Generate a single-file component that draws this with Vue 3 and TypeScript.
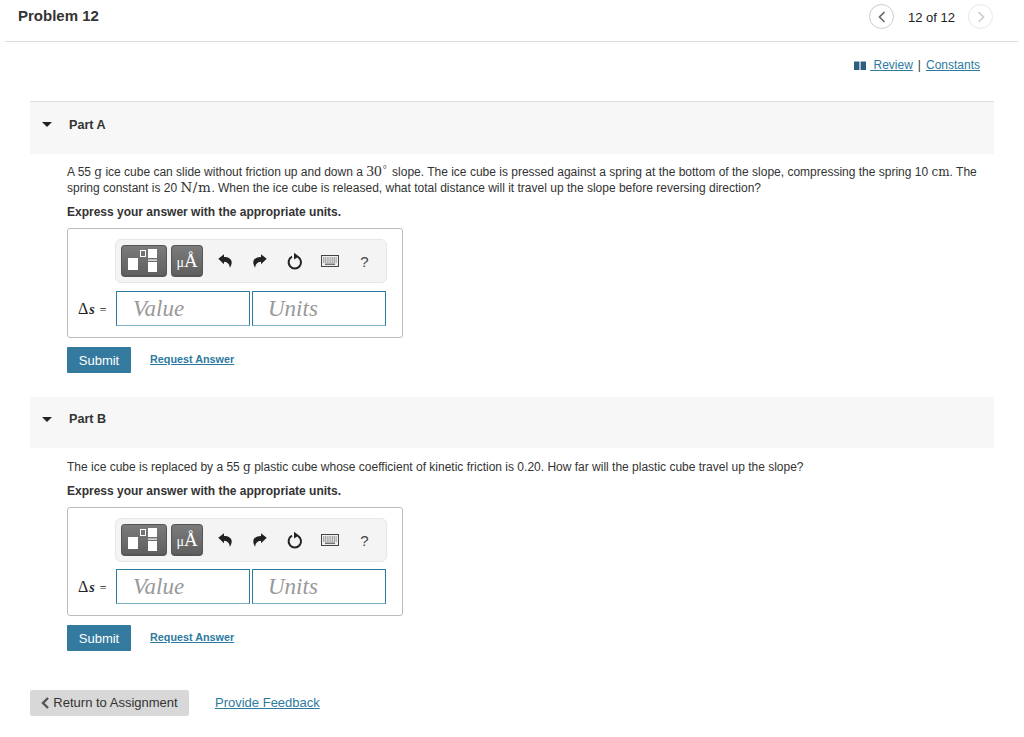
<script setup lang="ts">
interface Part { name: string; id: string }
const parts: Part[] = [
  { name: 'Part A', id: 'a' },
  { name: 'Part B', id: 'b' },
]
</script>

<template>
  <div class="page">
    <header class="top">
      <h1 class="title">Problem 12</h1>
      <nav class="pager">
        <span class="circle">
          <svg width="8" height="12" viewBox="0 0 8 12"><path d="M6.5 1 L1.5 6 L6.5 11" fill="none" stroke="#666" stroke-width="1.6"/></svg>
        </span>
        <span class="count">12 of 12</span>
        <span class="circle faint">
          <svg width="8" height="12" viewBox="0 0 8 12"><path d="M1.5 1 L6.5 6 L1.5 11" fill="none" stroke="#ccc" stroke-width="1.6"/></svg>
        </span>
      </nav>
    </header>

    <div class="links">
      <svg class="book" width="12" height="9" viewBox="0 0 12 9"><path d="M0 0.5 H5.4 V9 H0 Z M6.6 0.5 H12 V9 H6.6 Z" fill="#2f5f7f"/></svg>
      <a class="link">&nbsp;Review</a>
      <span class="sep">|</span>
      <a class="link">Constants</a>
    </div>

    <section v-for="p in parts" :key="p.id" class="part" :class="'part-' + p.id">
      <div class="part-head">
        <span class="tri"></span>
        <span class="part-name">{{ p.name }}</span>
      </div>
      <div class="part-body">
        <p v-if="p.id === 'a'" class="q">A 55 <span class="m">g</span> ice cube can slide without friction up and down a <span class="deg">30<span class="ring">°</span></span> slope. The ice cube is pressed against a spring at the bottom of the slope, compressing the spring 10 <span class="m">cm</span>. The spring constant is 20 <span class="m big">N/m</span>. When the ice cube is released, what total distance will it travel up the slope before reversing direction?</p>
        <p v-else class="q">The ice cube is replaced by a 55 <span class="m">g</span> plastic cube whose coefficient of kinetic friction is 0.20. How far will the plastic cube travel up the slope?</p>
        <p class="express">Express your answer with the appropriate units.</p>

        <div class="answer">
          <div class="toolbar">
            <span class="tbtn wide">
              <svg width="44" height="29" viewBox="1 1 44 29">
                <rect x="7" y="13" width="10" height="12" fill="#fff"/>
                <rect x="19.5" y="5.5" width="5" height="6" fill="none" stroke="#fff" stroke-width="1"/>
                <rect x="27" y="4" width="9" height="9" fill="#fff"/>
                <rect x="27" y="14.5" width="9" height="1.2" fill="#fff"/>
                <rect x="27" y="17" width="9" height="10" fill="#fff"/>
              </svg>
            </span>
            <span class="tbtn narrow"><span class="mu">μ</span><span class="ang">Å</span></span>
            <span class="ticon first">
              <svg width="14" height="14" viewBox="0 0 14 14"><path d="M0.3 4.8 L6 0.2 V3 C10.5 3 13.8 5 13.7 8.5 C13.6 10.5 12.8 12.4 11.8 13.8 C11.6 10.6 10 8 6 7.8 V10.2 Z" fill="#222"/></svg>
            </span>
            <span class="ticon">
              <svg width="14" height="14" viewBox="0 0 14 14"><path d="M13.7 4.8 L8 0.2 V3 C3.5 3 0.2 5 0.3 8.5 C0.4 10.5 1.2 12.4 2.2 13.8 C2.4 10.6 4 8 8 7.8 V10.2 Z" fill="#222"/></svg>
            </span>
            <span class="ticon">
              <svg width="16" height="18" viewBox="0 0 16 18"><path d="M10.8 4.8 A6.2 6.2 0 1 1 5 4.7" fill="none" stroke="#222" stroke-width="2"/><path d="M7 0.8 L12 4.5 L7 7.6 Z" fill="#222"/></svg>
            </span>
            <span class="ticon">
              <svg width="18" height="12" viewBox="0 0 18 12"><rect x="0.5" y="0.5" width="17" height="11" fill="#eee" stroke="#444"/><path d="M2 3 H16 M2 5 H16 M2 7 H16" stroke="#666" stroke-width="1" stroke-dasharray="1.2 .6"/><path d="M4 9.2 H14" stroke="#555" stroke-width="1.2"/></svg>
            </span>
            <span class="ticon help">?</span>
          </div>
          <div class="row">
            <span class="lhs"><span class="delta">Δ</span><i class="s">s</i><span class="eq"> =</span></span>
            <div class="input">Value</div>
            <div class="input second">Units</div>
          </div>
        </div>

        <div class="actions">
          <button class="submit" type="button">Submit</button>
          <a class="req">Request Answer</a>
        </div>
      </div>
    </section>

    <footer class="foot">
      <button class="ret" type="button">
        <svg width="9" height="12" viewBox="0 0 9 12"><path d="M7 1 L2 6 L7 11" fill="none" stroke="#555" stroke-width="2.4"/></svg>
        Return to Assignment
      </button>
      <a class="link fb">Provide Feedback</a>
    </footer>
  </div>
</template>

<style>
html, body { margin: 0; background: #fff; }
</style>

<style scoped>
.page {
  width: 1024px;
  height: 737px;
  overflow: hidden;
  font-family: "Liberation Sans", Arial, sans-serif;
  color: #222;
  font-size: 12px;
  box-sizing: border-box;
}
.top {
  margin: 0 6px 0 5px;
  height: 42px;
  box-sizing: border-box;
  border-bottom: 1px solid #ddd;
  display: flex;
  justify-content: space-between;
  align-items: flex-start;
  padding: 4px 25px 0 13px;
}
.title {
  margin: 4px 0 0;
  font-size: 15px;
  font-weight: 700;
  line-height: 16px;
  color: #333;
}
.pager { display: flex; align-items: center; }
.circle {
  width: 25px;
  height: 25px;
  box-sizing: border-box;
  border: 1px solid #ccc;
  border-radius: 50%;
  display: flex;
  align-items: center;
  justify-content: center;
}
.circle.faint { border-color: #e8e8e8; }
.count { margin: 1px 13px 0 14px; font-size: 13px; color: #222; }
.links {
  margin-top: 16px;
  height: 14px;
  padding-right: 44px;
  display: flex;
  justify-content: flex-end;
  align-items: center;
  font-size: 12px;
  line-height: 14px;
}
.book { margin-right: 4px; }
.link { color: #2e7a9e; text-decoration: underline; }
.sep { margin: 0 5px; color: #333; }
.part-head {
  margin: 0 30px;
  background: #f7f7f7;
  display: flex;
  align-items: center;
  box-sizing: border-box;
}
.part-a { margin-top: 29px; }
.part-a .part-head { border-top: 1px solid #ddd; height: 53px; padding-bottom: 7px; }
.part-b { margin-top: 24px; }
.part-b .part-head { height: 51px; padding-bottom: 7px; }
.tri {
  width: 0;
  height: 0;
  margin-left: 12px;
  border-left: 5px solid transparent;
  border-right: 5px solid transparent;
  border-top: 5px solid #222;
}
.part-name { margin-left: 17px; font-size: 12.6px; font-weight: 700; color: #333; }
.part-body { padding: 10px 44px 0 67px; }
.part-b .part-body { padding-top: 11px; }
.q {
  margin: 0;
  font-size: 12px;
  line-height: 16px;
  color: #333;
}
.m { font-family: "DejaVu Serif", "Liberation Serif", serif; font-size: 12px; line-height: 0; }
.m.big { font-size: 13.5px; letter-spacing: 0.6px; }
.deg { font-family: "Liberation Serif", serif; font-size: 15.5px; line-height: 0; margin-right: 2px; }
.ring { font-size: 10px; line-height: 0; margin-left: 1px; position: relative; top: -3px; }
.express { margin: 9px 0 0; font-size: 12px; line-height: 15px; font-weight: 700; color: #333; }
.answer {
  margin-top: 8px;
  width: 336px;
  height: 110px;
  box-sizing: border-box;
  border: 1px solid #bbb;
  border-radius: 3px;
  padding: 10px 0 0 47px;
}
.part-b .answer { height: 109px; }
.part-b .row { margin-top: 7px; }
.toolbar {
  width: 272px;
  height: 44px;
  box-sizing: border-box;
  background: #f4f4f4;
  border: 1px solid #e6e6e6;
  border-radius: 6px;
  display: flex;
  align-items: center;
  padding-left: 5px;
}
.tbtn {
  height: 32px;
  box-sizing: border-box;
  border-radius: 4px;
  background: linear-gradient(#7b7b7b, #5f5f5f);
  border: 1px solid #555;
  border-bottom-width: 2px;
  display: flex;
  align-items: center;
  justify-content: center;
  color: #fff;
}
.wide { width: 46px; }
.narrow {
  width: 32px;
  margin-left: 4px;
  font-family: "Liberation Serif", serif;
}
.mu { font-size: 14px; margin-top: 5px; }
.ang { font-size: 19px; }
.ticon {
  width: 35px;
  display: flex;
  justify-content: center;
  align-items: center;
}
.ticon.first { margin-left: 4px; }
.help { font-size: 15px; color: #444; }
.row {
  margin: 8px 0 0 -37px;
  display: flex;
  align-items: center;
}
.lhs {
  width: 38px;
  font-family: "Liberation Serif", serif;
  font-size: 13px;
  white-space: pre;
}
.delta { font-size: 16px; }
.s { font-size: 14px; font-weight: 700; margin-left: 1px; }
.eq { font-size: 12px; margin-left: 2px; }
.input {
  width: 134px;
  height: 35px;
  box-sizing: border-box;
  border: 1px solid #2e7a9e;
  border-bottom-color: #7fb0c6;
  padding-left: 16px;
  font-family: "Liberation Serif", serif;
  font-style: italic;
  font-size: 23px;
  line-height: 33px;
  color: #999;
}
.second { margin-left: 2px; padding-left: 15px; }
.actions {
  margin-top: 9px;
  display: flex;
  align-items: center;
}
.submit {
  width: 64px;
  height: 26px;
  border: 0;
  border-radius: 1px;
  background: #337a9e;
  color: #fff;
  font-family: inherit;
  font-size: 13px;
  padding: 0;
}
.req {
  margin: 0 0 2px 19px;
  color: #2e7a9e;
  font-weight: 700;
  font-size: 10.8px;
  text-decoration: underline;
}
.foot {
  margin-top: 39px;
  padding-left: 30px;
  display: flex;
  align-items: center;
}
.ret {
  width: 159px;
  height: 26px;
  border: 0;
  border-radius: 2px;
  background: #d8d8d8;
  color: #333;
  font-family: inherit;
  font-size: 13px;
  padding: 0 0 1px;
  display: flex;
  align-items: center;
  justify-content: center;
  gap: 3px;
}
.fb { margin: 0 0 1px 26px; font-size: 13px; }
</style>
